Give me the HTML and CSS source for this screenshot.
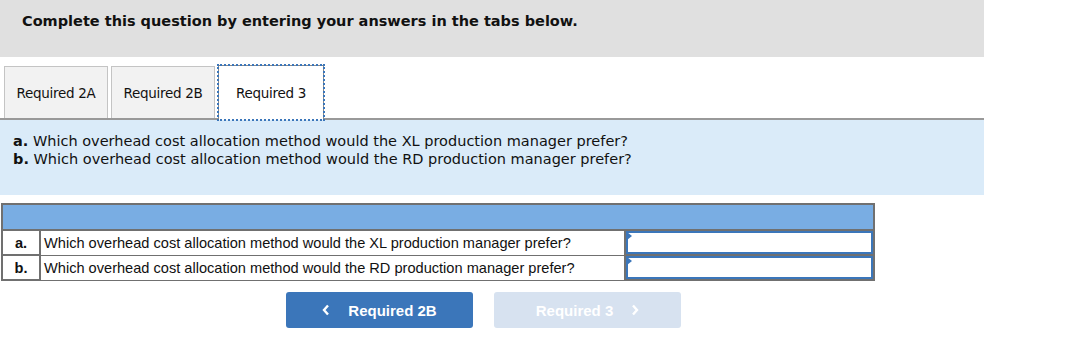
FILE: index.html
```html
<!DOCTYPE html>
<html lang="en">
<head>
  <meta charset="UTF-8">
  <title>Required 3</title>
  <link rel="stylesheet" href="styles.css">
</head>
<body>

  <div class="wrap">
    <div class="banner">Complete this question by entering your answers in the tabs below.</div>

    <div class="tabs">
      <div class="tab">Required 2A</div>
      <div class="tab">Required 2B</div>
      <div class="tab active">Required 3</div>
    </div>

    <div class="prompt">
      <div><b>a.</b> Which overhead cost allocation method would the XL production manager prefer?</div>
      <div><b>b.</b> Which overhead cost allocation method would the RD production manager prefer?</div>
    </div>

    <table class="answers">
      <tr class="head"><td colspan="3"></td></tr>
      <tr>
        <td class="lbl">a.</td>
        <td class="q">Which overhead cost allocation method would the XL production manager prefer?</td>
        <td class="ans"><div class="field"></div></td>
      </tr>
      <tr>
        <td class="lbl">b.</td>
        <td class="q">Which overhead cost allocation method would the RD production manager prefer?</td>
        <td class="ans"><div class="field"></div></td>
      </tr>
    </table>

    <div class="nav">
      <button class="btn prev">
        <svg class="chev" width="8" height="12" viewBox="0 0 8 12"><polyline points="6,1.5 2,6 6,10.5" fill="none" stroke="#fff" stroke-width="2.4"/></svg>
        Required 2B
      </button>
      <button class="btn next">
        Required 3
        <svg class="chev" width="8" height="12" viewBox="0 0 8 12"><polyline points="2,1.5 6,6 2,10.5" fill="none" stroke="#fff" stroke-width="2.4"/></svg>
      </button>
    </div>
  </div>

</body>
</html>
```

FILE: styles.css
```css
:root {
  --gray: #e0e0e0;
  --tab: #f2f2f2;
  --tabline: #c4c4c4;
  --panel: #daebf9;
  --head: #79ade3;
  --grid: #707070;
  --blue: #3b76ba;
  --pale: #d7e2f0;
}

html, body {
  margin: 0;
  padding: 0;
  background: #fff;
  color: #111;
}

.wrap {
  width: 984px;
}

.banner {
  height: 57px;
  box-sizing: border-box;
  background: var(--gray);
  padding: 13px 0 0 22px;
  font-family: "DejaVu Sans", Verdana, sans-serif;
  font-weight: bold;
  font-size: 14.5px;
}

.tabs {
  display: flex;
  gap: 3px;
  margin-top: 9px;
  padding-left: 4px;
  border-bottom: 2px solid #999;
  height: 52px;
}

.tab {
  width: 104px;
  box-sizing: border-box;
  background: var(--tab);
  border: 1px solid var(--tabline);
  border-bottom: none;
  display: flex;
  align-items: center;
  justify-content: center;
  font-family: "DejaVu Sans", Tahoma, sans-serif;
  font-size: 13.5px;
  letter-spacing: -0.3px;
}

.tab.active {
  background: #fff;
  width: 106px;
  border: 1px solid #888;
  border-bottom: none;
  outline: 2px dotted #3b76ba;
  outline-offset: -1px;
  margin-top: -1px;
  margin-bottom: -2px;
}

.prompt {
  height: 75px;
  box-sizing: border-box;
  background: var(--panel);
  padding: 12px 0 0 13px;
  font-family: "DejaVu Sans", Tahoma, sans-serif;
  font-size: 14.5px;
  line-height: 18px;
}

.answers {
  margin: 8px 0 0 1px;
  border-collapse: collapse;
  width: 874px;
  font-family: "Liberation Sans", Arial, sans-serif;
  font-size: 14.6px;
}

.answers td {
  border: 2px solid var(--grid);
  padding: 0;
}

.answers .head td {
  background: var(--head);
  height: 24px;
}

.answers tr + tr td {
  height: 23px;
}

.answers .lbl {
  width: 36px;
  text-align: center;
  font-weight: bold;
}

.answers .q {
  width: 580px;
  padding-left: 3px;
  border-width: 1px;
}

.field {
  position: relative;
  height: 23px;
  border: 2px solid var(--blue);
  box-sizing: border-box;
}

.field::before {
  content: "";
  position: absolute;
  top: -1px;
  left: -1px;
  border-top: 4px solid transparent;
  border-bottom: 4px solid transparent;
  border-left: 5px solid var(--blue);
}

.nav {
  display: flex;
  gap: 21px;
  margin-top: 11px;
  padding-left: 286px;
}

.btn {
  width: 187px;
  height: 36px;
  border: none;
  border-radius: 3px;
  color: #fff;
  font-family: "Liberation Sans", Arial, sans-serif;
  font-weight: bold;
  font-size: 15px;
  padding: 0;
  display: flex;
  align-items: center;
  justify-content: center;
  gap: 18px;
}

.btn.prev {
  background: var(--blue);
}

.btn.next {
  background: var(--pale);
}
```
